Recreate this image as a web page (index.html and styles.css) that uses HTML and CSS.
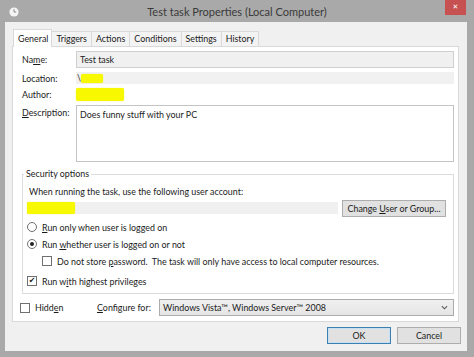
FILE: index.html
```html
<!DOCTYPE html>
<html lang="en">
    <head>
        <meta charset="UTF-8">
        <title>Test task Properties</title>
        <link rel="stylesheet" href="styles.css">
    </head>

    <body>

        <div class="window">

            <div class="titlebar">
                <svg class="app_icon" viewBox="0 0 10 10">
                    <circle cx="5" cy="5" r="4.6" fill="#f4f4f4"/>
                    <path d="M5 2.2 V5 H7.2" fill="none" stroke="#8a8a8a" stroke-width="1"/>
                </svg>
                <div class="title">Test task Properties (Local Computer)</div>
                <div class="close">&#x2715;</div>
            </div>

            <div class="client">

                <div class="tabs">
                    <div class="tab selected">General</div>
                    <div class="tab">Triggers</div>
                    <div class="tab">Actions</div>
                    <div class="tab">Conditions</div>
                    <div class="tab">Settings</div>
                    <div class="tab">History</div>
                </div>

                <div class="panel">

                    <div class="fields">
                        <div class="lbl">Na<u>m</u>e:</div>
                        <div class="field readonly">Test task</div>

                        <div class="lbl">Location:</div>
                        <div class="field plain"><span class="slash">\</span><span class="mark mark_loc"></span></div>

                        <div class="lbl">Author:</div>
                        <div class="field blank"><span class="mark mark_author"></span></div>

                        <div class="lbl lbl_top"><u>D</u>escription:</div>
                        <div class="field area">Does funny stuff with your PC</div>
                    </div>

                    <fieldset class="security">
                        <legend>Security options</legend>

                        <div class="hint">When running the task, use the following user account:</div>

                        <div class="user_row">
                            <div class="user_field"><span class="mark mark_user"></span></div>
                            <div class="btn btn_change">Change <u>U</u>ser or Group...</div>
                        </div>

                        <div class="opt"><span class="radio"></span><span><u>R</u>un only when user is logged on</span></div>
                        <div class="opt"><span class="radio on"></span><span>Run <u>w</u>hether user is logged on or not</span></div>
                        <div class="opt sub"><span class="check"></span><span>Do not store <u>p</u>assword.&nbsp; The task will only have access to local computer resources.</span></div>
                        <div class="opt last"><span class="check on">&#x2714;</span><span>Run w<u>i</u>th highest privileges</span></div>
                    </fieldset>

                    <div class="config_row">
                        <div class="opt"><span class="check"></span><span>Hidd<u>e</u>n</span></div>
                        <div class="cfg_lbl"><u>C</u>onfigure for:</div>
                        <div class="select">
                            <span>Windows Vista&#8482;, Windows Server&#8482; 2008</span>
                            <svg class="chevron" viewBox="0 0 8 5"><path d="M1 1 L4 4 L7 1" fill="none" stroke="#555" stroke-width="1.2"/></svg>
                        </div>
                    </div>

                </div>

                <div class="buttons">
                    <div class="btn btn_default">OK</div>
                    <div class="btn">Cancel</div>
                </div>

            </div>
        </div>

    </body>
</html>
```

FILE: styles.css
```css
* {
    box-sizing: border-box;
}

body {
    margin: 0;
    background-color: #a9a9a9;
    font-family: Lato, "Noto Sans", sans-serif;
    font-size: 8.9px;
    color: #1b1b1b;
    overflow: hidden;
}

u {
    text-decoration-thickness: 1px;
    text-underline-offset: 1px;
}

.window {
    width: 474px;
    height: 357px;
    display: flex;
    flex-direction: column;
}

/* title bar */

.titlebar {
    height: 22px;
    display: grid;
    grid-template-columns: 1fr auto 1fr;
    align-items: start;
}

.app_icon {
    width: 10px;
    height: 10px;
    margin: 7px 0 0 9px;
}

.title {
    font-size: 11px;
    line-height: 23px;
    color: #3a3a3a;
}

.close {
    justify-self: end;
    width: 21px;
    height: 15px;
    margin-right: 8px;
    background-color: #c75050;
    color: #fff;
    font-family: "DejaVu Sans", sans-serif;
    font-size: 7px;
    font-weight: bold;
    line-height: 15px;
    text-align: center;
}

/* client area */

.client {
    flex: 1;
    margin: 0 7px 6px 5px;
    padding: 7px 8px 0 7px;
    background-color: #f0f0f0;
    display: flex;
    flex-direction: column;
}

.tabs {
    display: flex;
    align-items: flex-end;
    height: 17px;
    padding-left: 1px;
}

.tab {
    height: 15px;
    padding: 0 4px;
    margin-right: -1px;
    border: 1px solid #d9d9d9;
    border-bottom: none;
    background-color: #f3f3f3;
    line-height: 14px;
}

.tab.selected {
    height: 18px;
    margin-bottom: -1px;
    padding: 0 3px 0 4px;
    background-color: #fff;
    position: relative;
    z-index: 1;
    line-height: 17px;
}

.panel {
    flex: 1;
    border: 1px solid #d9d9d9;
    background-color: #fff;
    padding: 4px 4px 4px 9px;
    display: flex;
    flex-direction: column;
}

/* top fields */

.fields {
    display: grid;
    grid-template-columns: 54px 1fr;
    grid-template-rows: 17px 12px 13px 57px;
    row-gap: 4px;
}

.lbl {
    align-self: center;
}

.lbl_top {
    align-self: start;
    padding-top: 2px;
}

.field {
    position: relative;
    padding: 0 3px;
    line-height: 15px;
}

.readonly {
    background-color: #f0f0f0;
    border: 1px solid #cfcfcf;
}

.plain {
    background-color: #f1f1f1;
    display: flex;
    align-items: center;
    padding: 0 0 0 1px;
}

.blank {
    padding: 0;
}

.area {
    border: 1px solid #c4c4c4;
    padding: 1px 3px;
}

.slash {
    line-height: 10px;
}

.mark {
    display: block;
    background-color: #f8f800;
    border-radius: 2px;
    box-shadow: 0 0 1px #e8e800;
}

.mark_loc {
    width: 22px;
    height: 9px;
}

.mark_author {
    width: 48px;
    height: 13px;
}

.mark_user {
    width: 48px;
    height: 12px;
}

/* security options */

.security {
    margin: 6px 0 0 0;
    padding: 6px 7px 6px 4px;
    border: 1px solid #dcdcdc;
    min-width: 0;
}

.security legend {
    margin-left: -3px;
    padding: 0 2px;
    line-height: 12px;
}

.hint {
    padding-left: 2px;
    line-height: 12px;
}

.user_row {
    display: flex;
    align-items: center;
    justify-content: space-between;
    margin-top: 2px;
    height: 16px;
}

.user_field {
    width: 311px;
    height: 12px;
    background-color: #f0f0f0;
}

.btn {
    height: 17px;
    width: 64px;
    border: 1px solid #adadad;
    background-color: #e1e1e1;
    text-align: center;
    line-height: 15px;
    white-space: nowrap;
}

.btn_change {
    width: 104px;
    height: 17px;
}

.btn_default {
    border-color: #3c7fb1;
    box-shadow: inset 0 0 0 1px #c6dff3;
}

.opt {
    display: flex;
    align-items: center;
    height: 12px;
    margin-top: 5px;
    white-space: nowrap;
}

.opt.sub {
    padding-left: 15px;
}

.opt.last {
    margin-top: 8px;
}

.radio {
    width: 10px;
    height: 10px;
    margin-right: 5px;
    border: 1px solid #707070;
    border-radius: 50%;
    background-color: #fff;
    display: flex;
    align-items: center;
    justify-content: center;
}

.radio.on::after {
    content: "";
    width: 4px;
    height: 4px;
    border-radius: 50%;
    background-color: #222;
}

.check {
    width: 10px;
    height: 10px;
    margin-right: 5px;
    border: 1px solid #707070;
    background-color: #fff;
    font-family: "DejaVu Sans", sans-serif;
    font-size: 8px;
    line-height: 8px;
    text-align: center;
    color: #222;
}

/* bottom row */

.config_row {
    display: grid;
    grid-template-columns: 77px 62px 1fr;
    align-items: center;
    margin: 5px 0 0 -2px;
    height: 17px;
}

.config_row .opt {
    margin-top: 0;
}

.select {
    height: 17px;
    border: 1px solid #acacac;
    background: linear-gradient(#f0f0f0, #e5e5e5);
    display: flex;
    align-items: center;
    justify-content: space-between;
    padding: 0 5px 0 3px;
}

.chevron {
    width: 7px;
    height: 5px;
}

.buttons {
    display: flex;
    justify-content: flex-end;
    gap: 6px;
    padding: 5px 0 7px 0;
    margin-right: -2px;
}
```
